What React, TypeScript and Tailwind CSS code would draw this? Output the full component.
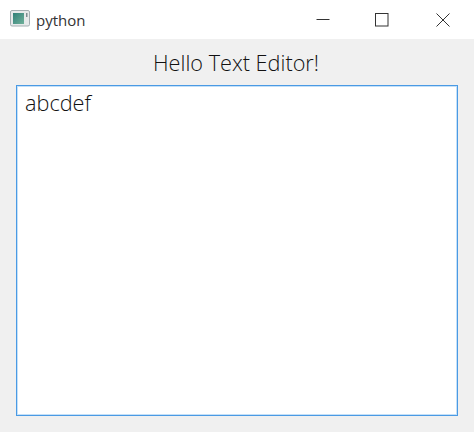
export default function App() {
  return (
    <div className="flex h-[432px] w-[474px] flex-col overflow-hidden bg-white font-['Open_Sans',sans-serif] text-[#111]">
      <div className="flex h-[39px] shrink-0 items-center bg-white">
        <svg className="ml-[10px] -mt-[3px]" width="20" height="17" viewBox="0 0 20 17">
          <rect x="0.5" y="0.5" width="19" height="15.5" rx="1.5" fill="#e6e9ea" stroke="#a4aeb2" />
          <defs>
            <linearGradient id="g" x1="0" y1="0" x2="1" y2="1">
              <stop offset="0" stopColor="#2f7f78" />
              <stop offset="1" stopColor="#6fb09a" />
            </linearGradient>
          </defs>
          <rect x="3" y="3" width="11" height="11" fill="url(#g)" />
          <rect x="16" y="3" width="1.5" height="4" fill="#7d8c90" />
        </svg>
        <span className="ml-[6px] pt-[2px] text-[15px] leading-none text-[#333]">python</span>
        <div className="ml-auto flex items-center">
          <svg width="14" height="14" viewBox="0 0 14 14" className="mr-[45px]">
            <path d="M0.5 6.5H13.5" stroke="#333" strokeWidth="1" />
          </svg>
          <svg width="14" height="14" viewBox="0 0 14 14" className="mr-[47px]">
            <rect x="0.5" y="0.5" width="12.5" height="12.5" fill="none" stroke="#333" strokeWidth="1" />
          </svg>
          <svg width="14" height="14" viewBox="0 0 14 14" className="mr-[24px]">
            <path d="M0.5 0.5L13.5 13.5M13.5 0.5L0.5 13.5" stroke="#333" strokeWidth="1" />
          </svg>
        </div>
      </div>
      <div className="flex min-h-0 flex-1 flex-col bg-[#f0f0f0] pb-[16px] pl-[16px] pr-[16px]">
        <div className="flex h-[46px] shrink-0 items-center justify-center pt-[2px] pr-[2px] text-[21.7px] font-light leading-none">
          Hello Text Editor!
        </div>
        <div className="flex-1 border border-[#4a9ae4] bg-white px-[8px] py-[4px] text-[21.7px] font-light leading-[26px] shadow-[inset_0_0_0_1px_#c4e0f8]">
          abcdef
        </div>
      </div>
    </div>
  );
}
